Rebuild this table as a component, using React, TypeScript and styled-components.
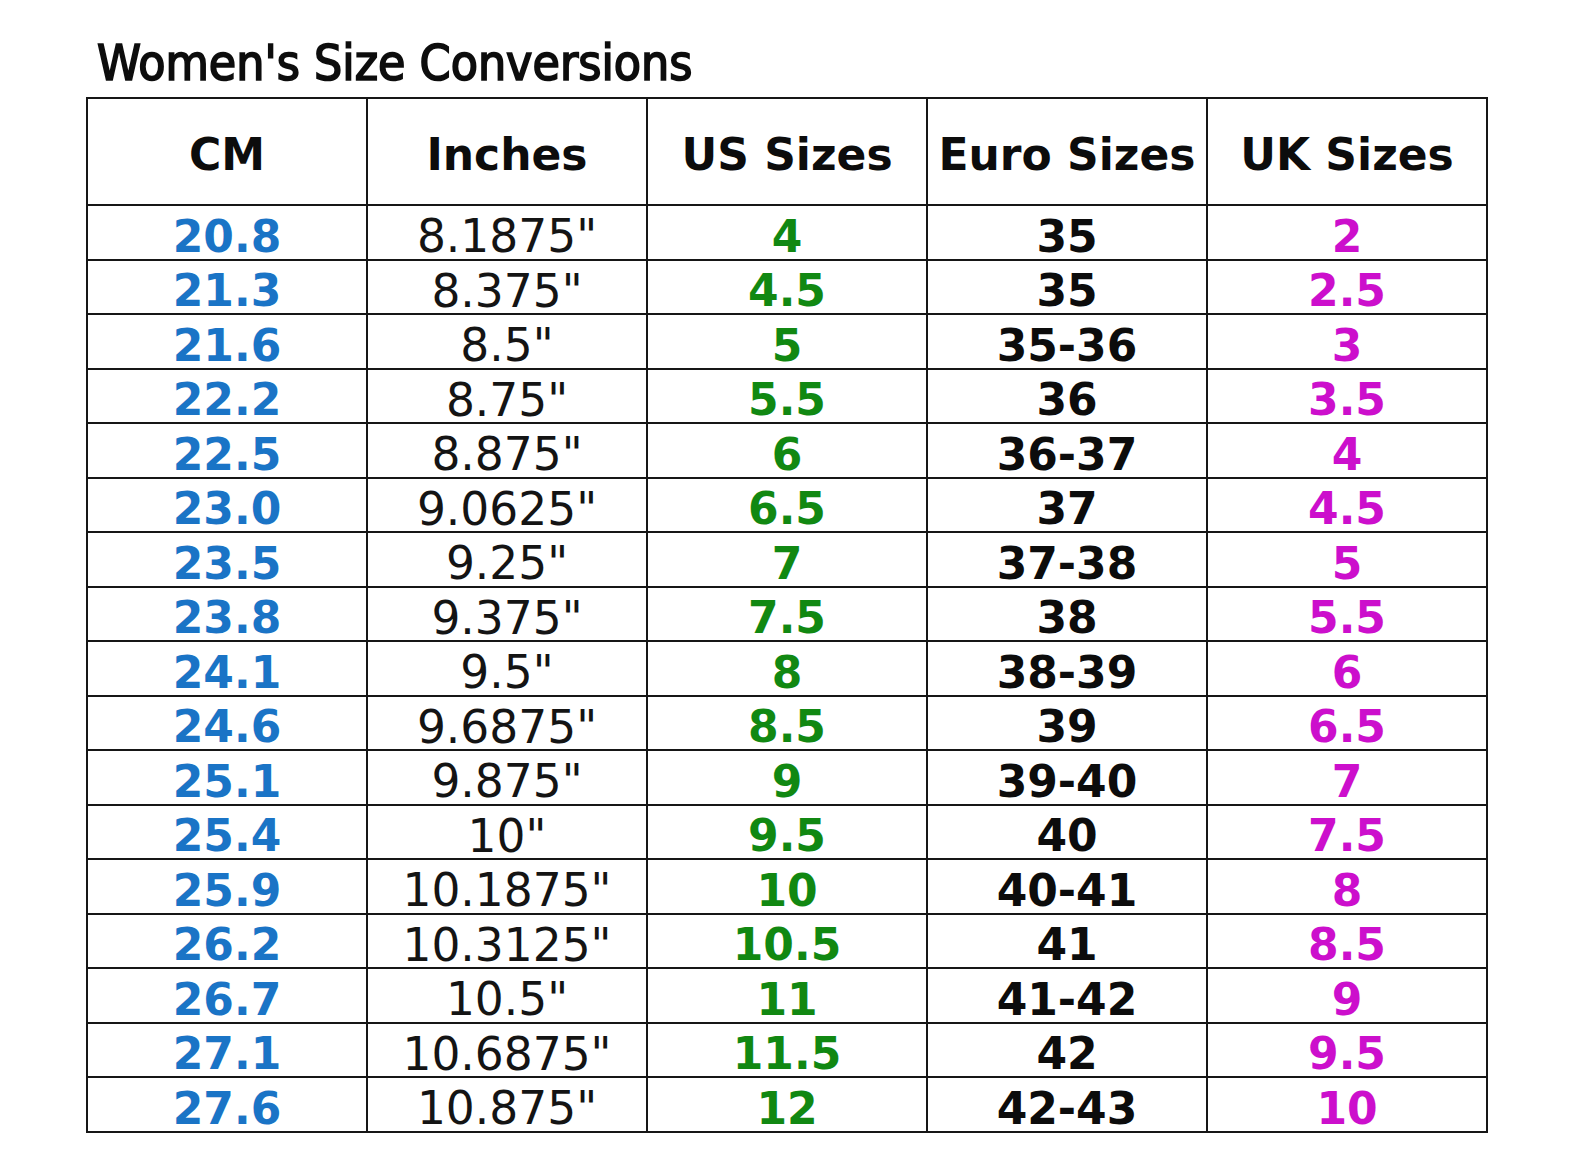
import React from "react";
import styled, { createGlobalStyle } from "styled-components";

const GlobalStyle = createGlobalStyle`
  html, body {
    margin: 0;
    padding: 0;
    background: #ffffff;
  }
  body {
    font-family: "DejaVu Sans", Verdana, sans-serif;
  }
`;

const Page = styled.div`
  width: 1588px;
  height: 1170px;
  box-sizing: border-box;
  padding: 39px 0 0 86px;
  background: #ffffff;
`;

const Title = styled.h1`
  margin: 0 0 10px 11px;
  height: 48px;
  font-family: "DejaVu Sans Condensed", "DejaVu Sans", sans-serif;
  font-stretch: condensed;
  font-weight: normal;
  font-size: 49.5px;
  line-height: 48px;
  color: #0d0d0d;
  -webkit-text-stroke: 1.7px #0d0d0d;
  white-space: nowrap;
`;

const Grid = styled.div`
  display: grid;
  grid-template-columns: repeat(5, 280px);
  grid-template-rows: 107px repeat(17, 54.5px);
  width: max-content;
  border-top: 2px solid #161616;
  border-left: 2px solid #161616;
`;

type Tone = "blue" | "plain" | "green" | "black" | "magenta";

const toneColor: Record<Tone, string> = {
  blue: "#1a74c6",
  plain: "#141414",
  green: "#118812",
  black: "#0c0c0c",
  magenta: "#cc0fcc",
};

const Cell = styled.div`
  box-sizing: border-box;
  display: flex;
  align-items: center;
  justify-content: center;
  border-right: 2px solid #161616;
  border-bottom: 2px solid #161616;
  white-space: nowrap;
`;

const HeadCell = styled(Cell)`
  padding-top: 6px;
  font-size: 44px;
  font-weight: bold;
  line-height: 1;
  color: #0c0c0c;
`;

const DataCell = styled(Cell)<{ $tone: Tone }>`
  padding-top: 9px;
  font-size: ${(p) => (p.$tone === "plain" ? "45.5px" : "44px")};
  font-weight: ${(p) => (p.$tone === "plain" ? "normal" : "bold")};
  line-height: 1;
  color: ${(p) => toneColor[p.$tone]};
`;

const headers = ["CM", "Inches", "US Sizes", "Euro Sizes", "UK Sizes"];
const tones: Tone[] = ["blue", "plain", "green", "black", "magenta"];

const rows: string[][] = [
  ["20.8", '8.1875"', "4", "35", "2"],
  ["21.3", '8.375"', "4.5", "35", "2.5"],
  ["21.6", '8.5"', "5", "35-36", "3"],
  ["22.2", '8.75"', "5.5", "36", "3.5"],
  ["22.5", '8.875"', "6", "36-37", "4"],
  ["23.0", '9.0625"', "6.5", "37", "4.5"],
  ["23.5", '9.25"', "7", "37-38", "5"],
  ["23.8", '9.375"', "7.5", "38", "5.5"],
  ["24.1", '9.5"', "8", "38-39", "6"],
  ["24.6", '9.6875"', "8.5", "39", "6.5"],
  ["25.1", '9.875"', "9", "39-40", "7"],
  ["25.4", '10"', "9.5", "40", "7.5"],
  ["25.9", '10.1875"', "10", "40-41", "8"],
  ["26.2", '10.3125"', "10.5", "41", "8.5"],
  ["26.7", '10.5"', "11", "41-42", "9"],
  ["27.1", '10.6875"', "11.5", "42", "9.5"],
  ["27.6", '10.875"', "12", "42-43", "10"],
];

export default function App() {
  return (
    <>
      <GlobalStyle />
      <Page>
        <Title>Women's Size Conversions</Title>
        <Grid>
          {headers.map((h) => (
            <HeadCell key={h}>{h}</HeadCell>
          ))}
          {rows.map((row, r) =>
            row.map((v, c) => (
              <DataCell key={`${r}-${c}`} $tone={tones[c]}>
                {v}
              </DataCell>
            ))
          )}
        </Grid>
      </Page>
    </>
  );
}
